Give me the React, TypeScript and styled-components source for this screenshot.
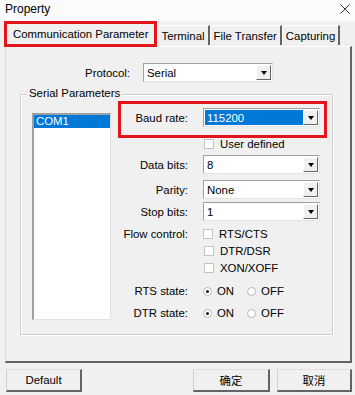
import React from "react";
import styled, { createGlobalStyle, css } from "styled-components";

const colors = {
  face: "#f0f0f0",
  light: "#ffffff",
  shadow: "#a0a0a0",
  dark: "#646464",
  red: "#e3141c",
  select: "#0078d7",
};

const GlobalStyle = createGlobalStyle`
  html, body {
    margin: 0;
    padding: 0;
    background: ${colors.face};
  }
  body {
    font-family: "Liberation Sans", "Noto Sans CJK SC", sans-serif;
    font-size: 11.4px;
    color: #000;
  }
  * { box-sizing: border-box; }
`;

const Window = styled.div`
  width: 355px;
  height: 395px;
  display: flex;
  flex-direction: column;
  background: ${colors.face};
  overflow: hidden;
`;

const TitleBar = styled.div`
  height: 21px;
  display: flex;
  align-items: center;
  justify-content: space-between;
  padding: 0 5px 3px 5px;
  background: #fbfbfb;
`;

const Title = styled.span`
  font-size: 12px;
`;

const TabStrip = styled.div`
  height: 25px;
  display: flex;
  align-items: flex-end;
  padding-left: 4px;
  position: relative;
  z-index: 1;
`;

const Tab = styled.div<{ $active?: boolean }>`
  display: flex;
  align-items: center;
  white-space: nowrap;
  ${({ $active }) =>
    $active
      ? css`
          height: 26px;
          margin-bottom: -1px;
          padding: 0 6px 0 6px;
          border: 3px solid ${colors.red};
          background: ${colors.face};
        `
      : css`
          height: 20px;
          margin-bottom: 1px;
          padding: 0 3px 0 3px;
          border-top: 1px solid ${colors.light};
          border-left: 1px solid ${colors.light};
          border-right: 2px solid ${colors.dark};
        `}
`;

const Panel = styled.div`
  height: 317px;
  margin: 0 3px 0 5px;
  border-top: 1px solid ${colors.light};
  border-left: 1px solid #d8d8d8;
  border-right: 2px solid ${colors.dark};
  border-bottom: 2px solid ${colors.dark};
  padding-top: 16px;
  display: flex;
  flex-direction: column;
`;

const ProtocolRow = styled.div`
  display: flex;
  align-items: center;
  gap: 13px;
`;

const Label = styled.span<{ $width: number }>`
  width: ${({ $width }) => $width}px;
  flex: none;
  text-align: right;
  white-space: nowrap;
`;

const ComboField = styled.div<{ $width?: number }>`
  height: 19px;
  display: flex;
  align-items: stretch;
  background: #fff;
  border-top: 1px solid ${colors.shadow};
  border-left: 1px solid ${colors.shadow};
  border-right: 1px solid #e3e3e3;
  border-bottom: 1px solid #e3e3e3;
  padding: 1px;
  ${({ $width }) => ($width ? `width: ${$width}px;` : "flex: 1;")}
`;

const ComboText = styled.span<{ $selected?: boolean }>`
  flex: 1;
  display: flex;
  align-items: center;
  padding-left: 2px;
  ${({ $selected }) =>
    $selected &&
    css`
      background: ${colors.select};
      color: #fff;
    `}
`;

const ComboButton = styled.span`
  width: 15px;
  flex: none;
  display: flex;
  align-items: center;
  justify-content: center;
  background: ${colors.face};
  border-top: 1px solid ${colors.light};
  border-left: 1px solid ${colors.light};
  border-right: 1px solid ${colors.dark};
  border-bottom: 1px solid ${colors.dark};
  &::after {
    content: "";
    border-left: 3px solid transparent;
    border-right: 3px solid transparent;
    border-top: 4px solid #000;
    margin-top: 1px;
  }
`;

const GroupBox = styled.div`
  position: relative;
  width: 313px;
  height: 241px;
  margin: 12px 0 0 14px;
  border: 1px solid #cfcfcf;
  box-shadow: inset 1px 1px 0 ${colors.light}, 1px 1px 0 ${colors.light};
  display: flex;
  align-items: flex-start;
  padding: 6px 12px 0 11px;
`;

const Legend = styled.span`
  position: absolute;
  top: -8px;
  left: 6px;
  padding: 0 2px;
  background: ${colors.face};
`;

const ListBox = styled.div`
  width: 79px;
  height: 207px;
  margin-top: 12px;
  background: #fff;
  border-top: 2px solid ${colors.shadow};
  border-left: 2px solid ${colors.shadow};
  border-right: 1px solid #e3e3e3;
  border-bottom: 1px solid #e3e3e3;
  flex: none;
`;

const ListItem = styled.div<{ $selected?: boolean }>`
  height: 13px;
  line-height: 13px;
  padding-left: 2px;
  ${({ $selected }) =>
    $selected &&
    css`
      background: ${colors.select};
      color: #fff;
    `}
`;

const Form = styled.div`
  width: 199px;
  margin-left: 10px;
  display: flex;
  flex-direction: column;
`;

const Row = styled.div<{ $gap?: number; $height?: number }>`
  display: flex;
  align-items: center;
  gap: 15px;
  margin-top: ${({ $gap }) => $gap ?? 0}px;
  ${({ $height }) => $height && `height: ${$height}px;`}
`;

const HighlightRow = styled(Row)`
  margin: 0 -7px 0 -3px;
  border: 3px solid ${colors.red};
  padding: 4px 4px 8px 0;
`;

const Controls = styled.div<{ $indent?: number }>`
  display: flex;
  align-items: center;
  gap: 6px;
  margin-left: ${({ $indent }) => $indent ?? 0}px;
`;

const CheckBox = styled.span`
  width: 10px;
  height: 10px;
  flex: none;
  background: #fff;
  border: 1px solid #c4c4c4;
`;

const Choice = styled.label`
  display: flex;
  align-items: center;
  gap: 5px;
  margin-right: 7px;
`;

const Radio = styled.span<{ $checked?: boolean }>`
  width: 9px;
  height: 9px;
  flex: none;
  border-radius: 50%;
  background: #fff;
  border: 1px solid #b5b5b5;
  display: flex;
  align-items: center;
  justify-content: center;
  &::after {
    content: "";
    width: 3px;
    height: 3px;
    border-radius: 50%;
    background: ${({ $checked }) => ($checked ? "#111" : "transparent")};
  }
`;

const ButtonRow = styled.div`
  display: flex;
  gap: 7px;
  padding: 6px 3px 0 6px;
`;

const Button = styled.button<{ $width: number; $push?: boolean }>`
  width: ${({ $width }) => $width}px;
  height: 23px;
  font: inherit;
  color: #000;
  background: ${colors.face};
  border-top: 1px solid #e0e0e0;
  border-left: 1px solid #d0d0d0;
  border-right: 2px solid ${colors.dark};
  border-bottom: 2px solid ${colors.dark};
  padding: 0;
  ${({ $push }) => $push && "margin-left: auto;"}
`;

const CloseIcon = () => (
  <svg width="10" height="10" viewBox="0 0 10 10">
    <path d="M0.5 0.5 L9.5 9.5 M9.5 0.5 L0.5 9.5" stroke="#333" strokeWidth="1" />
  </svg>
);

const Combo = ({
  value,
  width,
  selected,
}: {
  value: string;
  width?: number;
  selected?: boolean;
}) => (
  <ComboField $width={width}>
    <ComboText $selected={selected}>{value}</ComboText>
    <ComboButton />
  </ComboField>
);

const ComboRow = ({ label, value, gap }: { label: string; value: string; gap: number }) => (
  <Row $gap={gap}>
    <Label $width={67}>{label}</Label>
    <Combo value={value} />
  </Row>
);

export default function App() {
  return (
    <>
      <GlobalStyle />
      <Window>
        <TitleBar>
          <Title>Property</Title>
          <CloseIcon />
        </TitleBar>
        <TabStrip>
          <Tab $active>Communication Parameter</Tab>
          <Tab>Terminal</Tab>
          <Tab>File Transfer</Tab>
          <Tab>Capturing</Tab>
        </TabStrip>
        <Panel>
          <ProtocolRow>
            <Label $width={124}>Protocol:</Label>
            <Combo value="Serial" width={130} />
          </ProtocolRow>
          <GroupBox>
            <Legend>Serial Parameters</Legend>
            <ListBox>
              <ListItem $selected>COM1</ListItem>
            </ListBox>
            <Form>
              <HighlightRow>
                <Label $width={67}>Baud rate:</Label>
                <Combo value="115200" selected />
              </HighlightRow>
              <Row $height={12}>
                <Controls $indent={83}>
                  <CheckBox />
                  User defined
                </Controls>
              </Row>
              <ComboRow label="Data bits:" value="8" gap={5} />
              <ComboRow label="Parity:" value="None" gap={6} />
              <ComboRow label="Stop bits:" value="1" gap={3} />
              <Row $gap={5} $height={16}>
                <Label $width={67}>Flow control:</Label>
                <Controls>
                  <CheckBox />
                  RTS/CTS
                </Controls>
              </Row>
              <Row $gap={1} $height={16}>
                <Controls $indent={83}>
                  <CheckBox />
                  DTR/DSR
                </Controls>
              </Row>
              <Row $gap={1} $height={16}>
                <Controls $indent={83}>
                  <CheckBox />
                  XON/XOFF
                </Controls>
              </Row>
              <Row $gap={7} $height={16}>
                <Label $width={67}>RTS state:</Label>
                <Controls>
                  <Choice><Radio $checked />ON</Choice>
                  <Choice><Radio />OFF</Choice>
                </Controls>
              </Row>
              <Row $gap={6} $height={16}>
                <Label $width={67}>DTR state:</Label>
                <Controls>
                  <Choice><Radio $checked />ON</Choice>
                  <Choice><Radio />OFF</Choice>
                </Controls>
              </Row>
            </Form>
          </GroupBox>
        </Panel>
        <ButtonRow>
          <Button $width={76}>Default</Button>
          <Button $width={77} $push>确定</Button>
          <Button $width={75}>取消</Button>
        </ButtonRow>
      </Window>
    </>
  );
}
